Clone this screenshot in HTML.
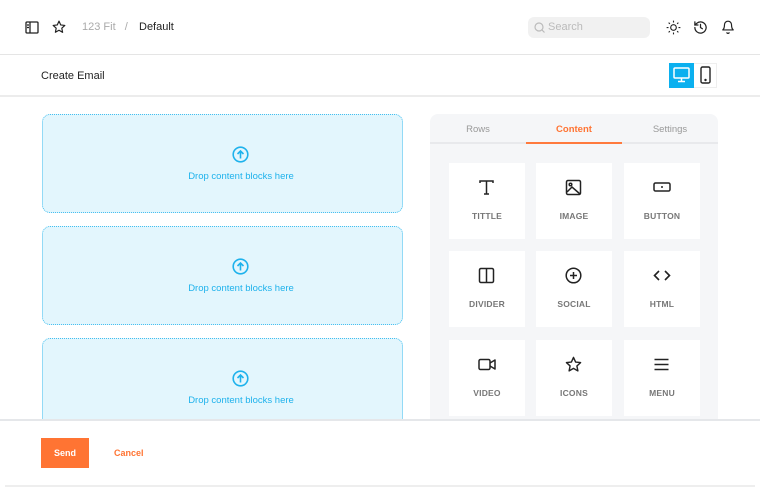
<!DOCTYPE html>
<html><head><meta charset="utf-8"><style>
*{box-sizing:border-box;margin:0;padding:0}
body{width:760px;height:488px;overflow:hidden;background:#fff;font-family:"Liberation Sans",sans-serif;position:relative}
.abs{position:absolute}
svg{display:block}
.drop{position:absolute;left:42px;width:361px;height:99px;background:#e3f6fd;border:1px dotted #43bff0;border-radius:8px}
.drop svg{position:absolute;left:189px;top:31px}
.drop span{position:absolute;left:0;width:396px;top:56px;text-align:center;color:#1eb2ec;font-size:9.5px}
.card{position:absolute;width:76px;height:76px;background:#fff}
.card svg{position:absolute;left:29px;top:16px}
.card span{position:absolute;left:0;right:0;top:48px;text-align:center;color:#777;font-size:8.5px;font-weight:bold;letter-spacing:.2px}
</style></head><body>
<svg class="abs" style="left:25px;top:21px" width="14" height="13" viewBox="0 0 14 13" fill="none" stroke="#222" stroke-width="1.3"><rect x="1" y="1" width="12" height="11" rx="1"/><line x1="5" y1="1" x2="5" y2="12"/><line x1="2" y1="4" x2="4" y2="4"/><line x1="2" y1="6.5" x2="4" y2="6.5"/></svg>
<svg class="abs" style="left:52px;top:20px" width="14" height="14" viewBox="0 0 24 24" fill="none" stroke="#222" stroke-width="2" stroke-linejoin="round"><path d="M12 2l3 6.5 7 .8-5.2 4.8 1.4 7L12 17.5 5.8 21l1.4-7L2 9.3l7-.8z"/></svg>
<div class="abs" style="left:82px;top:21px;font-size:11px;color:#aaa">123 Fit &nbsp; / &nbsp;</div>
<div class="abs" style="left:139px;top:21px;font-size:11px;color:#222">Default</div>
<div class="abs" style="left:528px;top:17px;width:122px;height:21px;background:#f1f1f1;border-radius:6px"></div>
<svg class="abs" style="left:534px;top:22px" width="11" height="11" viewBox="0 0 11 11" fill="none" stroke="#bbb" stroke-width="1.2"><circle cx="5" cy="5" r="4"/><line x1="8" y1="8" x2="10.5" y2="10.5"/></svg>
<div class="abs" style="left:548px;top:21px;font-size:11px;color:#bbb">Search</div>
<svg class="abs" style="left:666px;top:20px" width="15" height="15" viewBox="0 0 24 24" fill="none" stroke="#222" stroke-width="1.8"><circle cx="12" cy="12" r="4.5"/><path d="M12 1v3M12 20v3M1 12h3M20 12h3M4.2 4.2l2 2M17.8 17.8l2 2M4.2 19.8l2-2M17.8 6.2l2-2"/></svg>
<svg class="abs" style="left:693px;top:20px" width="15" height="15" viewBox="0 0 24 24" fill="none" stroke="#222" stroke-width="2" stroke-linecap="round"><path d="M3 12a9 9 0 1 0 3-6.7L3 8"/><path d="M3 3v5h5"/><path d="M12 7v5l3 2"/></svg>
<svg class="abs" style="left:721px;top:19px" width="14" height="16" viewBox="0 0 24 26" fill="none" stroke="#222" stroke-width="2" stroke-linejoin="round"><path d="M18 9a6 6 0 0 0-12 0c0 7-3 9-3 9h18s-3-2-3-9"/><path d="M10 22a2 2 0 0 0 4 0"/></svg>
<div class="abs" style="left:0;top:54px;width:760px;height:1px;background:#e5e5e5"></div>
<div class="abs" style="left:41px;top:70px;font-size:11px;color:#222">Create Email</div>
<div class="abs" style="left:669px;top:63px;width:25px;height:25px;background:#0bb0ef"></div>
<svg class="abs" style="left:673px;top:67px" width="17" height="16" viewBox="0 0 17 16" fill="none" stroke="#fff" stroke-width="1.5"><rect x="1" y="1" width="15" height="10" rx="1"/><line x1="8.5" y1="11" x2="8.5" y2="14"/><line x1="5" y1="14.5" x2="12" y2="14.5"/></svg>
<div class="abs" style="left:694px;top:63px;width:23px;height:25px;border:1px solid #eee;border-left:none"></div>
<svg class="abs" style="left:700px;top:66px" width="11" height="18" viewBox="0 0 11 18" fill="none" stroke="#222" stroke-width="1.4"><rect x="1" y="1" width="9" height="16" rx="1.5"/><circle cx="5.5" cy="14" r=".5" fill="#222"/></svg>
<div class="abs" style="left:0;top:95px;width:760px;height:2px;background:#ececec"></div>
<div class="drop" style="top:114px"><svg width="17" height="17" viewBox="0 0 17 17" fill="none" stroke="#1eb2ec" stroke-width="1.6"><circle cx="8.5" cy="8.5" r="7.3"/><path d="M8.5 12.5V5M5.5 8l3-3 3 3"/></svg><span>Drop content blocks here</span></div>
<div class="drop" style="top:226px"><svg width="17" height="17" viewBox="0 0 17 17" fill="none" stroke="#1eb2ec" stroke-width="1.6"><circle cx="8.5" cy="8.5" r="7.3"/><path d="M8.5 12.5V5M5.5 8l3-3 3 3"/></svg><span>Drop content blocks here</span></div>
<div class="drop" style="top:338px;height:120px"><svg width="17" height="17" viewBox="0 0 17 17" fill="none" stroke="#1eb2ec" stroke-width="1.6"><circle cx="8.5" cy="8.5" r="7.3"/><path d="M8.5 12.5V5M5.5 8l3-3 3 3"/></svg><span>Drop content blocks here</span></div>
<div class="abs" style="left:430px;top:114px;width:288px;height:330px;background:#f5f6f8;border-radius:8px"></div>
<div class="abs" style="left:430px;top:142px;width:288px;height:2px;background:#e8e9ec"></div>
<div class="abs" style="left:526px;top:142px;width:96px;height:2px;background:#ff7a3d"></div>
<div class="abs" style="left:430px;top:124px;width:96px;text-align:center;font-size:9.5px;color:#999">Rows</div>
<div class="abs" style="left:526px;top:124px;width:96px;text-align:center;font-size:9.5px;color:#ff7433;font-weight:bold">Content</div>
<div class="abs" style="left:622px;top:124px;width:96px;text-align:center;font-size:9.5px;color:#999">Settings</div>
<div class="card" style="left:449px;top:163px"><svg width="17" height="17" viewBox="0 0 17 17" fill="none" stroke="#222" stroke-width="1.5"><path d="M2 4V2h13v2M8.5 2v13M6 15h5"/></svg><span>TITTLE</span></div>
<div class="card" style="left:536px;top:163px"><svg width="17" height="17" viewBox="0 0 17 17" fill="none" stroke="#222" stroke-width="1.5"><rect x="1.5" y="1.5" width="14" height="14" rx="1.5"/><circle cx="5.5" cy="5.5" r="1.3"/><path d="M2 13l5-5 8 7"/></svg><span>IMAGE</span></div>
<div class="card" style="left:624px;top:163px"><svg width="18" height="17" viewBox="0 0 18 17" fill="none" stroke="#222" stroke-width="1.5"><rect x="1" y="4" width="16" height="8" rx="1.5"/><line x1="9" y1="7" x2="9" y2="9"/></svg><span>BUTTON</span></div>
<div class="card" style="left:449px;top:251px"><svg width="17" height="17" viewBox="0 0 17 17" fill="none" stroke="#222" stroke-width="1.5"><rect x="1.5" y="1.5" width="14" height="14" rx="1.5"/><line x1="8.5" y1="1.5" x2="8.5" y2="15.5"/></svg><span>DIVIDER</span></div>
<div class="card" style="left:536px;top:251px"><svg width="17" height="17" viewBox="0 0 17 17" fill="none" stroke="#222" stroke-width="1.5"><circle cx="8.5" cy="8.5" r="7.3"/><path d="M8.5 5v7M5 8.5h7"/></svg><span>SOCIAL</span></div>
<div class="card" style="left:624px;top:251px"><svg width="18" height="17" viewBox="0 0 18 17" fill="none" stroke="#222" stroke-width="1.6"><path d="M6 4L1.5 8.5 6 13M12 4l4.5 4.5L12 13"/></svg><span>HTML</span></div>
<div class="card" style="left:449px;top:340px"><svg width="18" height="17" viewBox="0 0 18 17" fill="none" stroke="#222" stroke-width="1.5" stroke-linejoin="round"><rect x="1" y="3.5" width="11" height="10" rx="1.5"/><path d="M12 7l5-3v9l-5-3"/></svg><span>VIDEO</span></div>
<div class="card" style="left:536px;top:340px"><svg width="17" height="17" viewBox="0 0 24 24" fill="none" stroke="#222" stroke-width="2" stroke-linejoin="round"><path d="M12 2l3 6.5 7 .8-5.2 4.8 1.4 7L12 17.5 5.8 21l1.4-7L2 9.3l7-.8z"/></svg><span>ICONS</span></div>
<div class="card" style="left:624px;top:340px"><svg width="17" height="17" viewBox="0 0 17 17" fill="none" stroke="#222" stroke-width="1.5"><path d="M1.5 3.5h14M1.5 8.5h14M1.5 13.5h14"/></svg><span>MENU</span></div>
<div class="abs" style="left:0;top:419px;width:760px;height:69px;background:#fff;border-top:2px solid #e5e7ea"></div>
<div class="abs" style="left:41px;top:438px;width:48px;height:30px;background:#ff7433;color:#fff;font-size:9px;font-weight:bold;text-align:center;line-height:30px">Send</div>
<div class="abs" style="left:114px;top:448px;color:#ff7433;font-size:9px;font-weight:bold">Cancel</div>
<div class="abs" style="left:5px;top:485px;width:750px;height:2px;background:#eeeeee"></div>
</body></html>
